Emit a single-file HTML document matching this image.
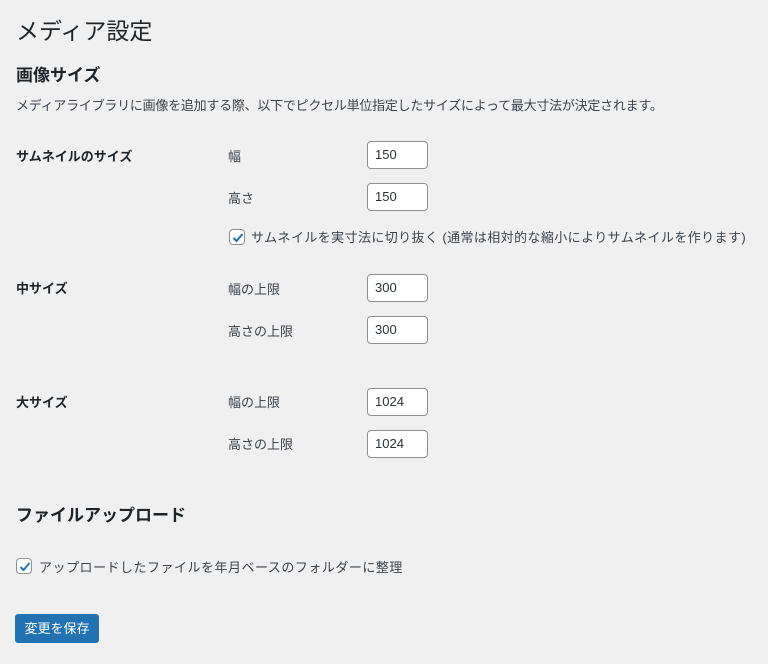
<!DOCTYPE html>
<html><head><meta charset="utf-8"><style>
body{margin:0;width:768px;height:664px;background:#f0f0f1;font-family:"Liberation Sans","Noto Sans CJK JP",sans-serif;color:#1d2327;position:relative;overflow:hidden}
.a{position:absolute;white-space:nowrap}
.t{left:16px;top:12px;font-size:23px;font-weight:400;color:#1d2327}
.h{font-size:17px;font-weight:700;left:16px}
.d{font-size:13px;left:16px;top:95px;letter-spacing:-0.25px;color:#3c434a}
.l{font-size:13px;font-weight:700;left:16px}
.s{font-size:13px;left:228px;color:#3c434a}
.i{left:367px;border:1px solid #8c8f94;border-radius:4px;background:#fff;font-size:13px;line-height:26px;padding-left:7px;box-sizing:border-box;width:61px;height:28px;color:#2c3338}
.c{width:16px;height:16px;border:1px solid #8c8f94;border-radius:4px;background:#fff;box-sizing:border-box}
.c svg{position:absolute;left:0;top:0}
.b{left:15px;top:614px;width:84px;height:29px;background:#2271b1;border-radius:3px;color:#fff;font-size:13px;line-height:29px;text-align:center}
</style></head><body>
<div class="a t">メディア設定</div>
<div class="a h" style="top:61px">画像サイズ</div>
<div class="a d">メディアライブラリに画像を追加する際、以下でピクセル単位指定したサイズによって最大寸法が決定されます。</div>
<div class="a l" style="top:146px">サムネイルのサイズ</div>
<div class="a s" style="top:146px">幅</div><div class="a i" style="top:141px">150</div>
<div class="a s" style="top:188px">高さ</div><div class="a i" style="top:183px">150</div>
<div class="a c" style="left:229px;top:229px"><svg width="16" height="16" viewBox="0 0 16 16"><path d="M3.5 8l3 3 6-7" stroke="#2271b1" stroke-width="2" fill="none"/></svg></div>
<div class="a s" style="left:251px;top:227px;letter-spacing:0.4px">サムネイルを実寸法に切り抜く (通常は相対的な縮小によりサムネイルを作ります)</div>
<div class="a l" style="top:278px">中サイズ</div>
<div class="a s" style="top:279px">幅の上限</div><div class="a i" style="top:274px">300</div>
<div class="a s" style="top:321px">高さの上限</div><div class="a i" style="top:316px">300</div>
<div class="a l" style="top:392px">大サイズ</div>
<div class="a s" style="top:392px">幅の上限</div><div class="a i" style="top:388px">1024</div>
<div class="a s" style="top:434px">高さの上限</div><div class="a i" style="top:430px">1024</div>
<div class="a h" style="top:501px">ファイルアップロード</div>
<div class="a c" style="left:16px;top:558px"><svg width="16" height="16" viewBox="0 0 16 16"><path d="M3.5 8l3 3 6-7" stroke="#2271b1" stroke-width="2" fill="none"/></svg></div>
<div class="a s" style="left:39px;top:557px;letter-spacing:0.5px">アップロードしたファイルを年月ベースのフォルダーに整理</div>
<div class="a b">変更を保存</div>
</body></html>
